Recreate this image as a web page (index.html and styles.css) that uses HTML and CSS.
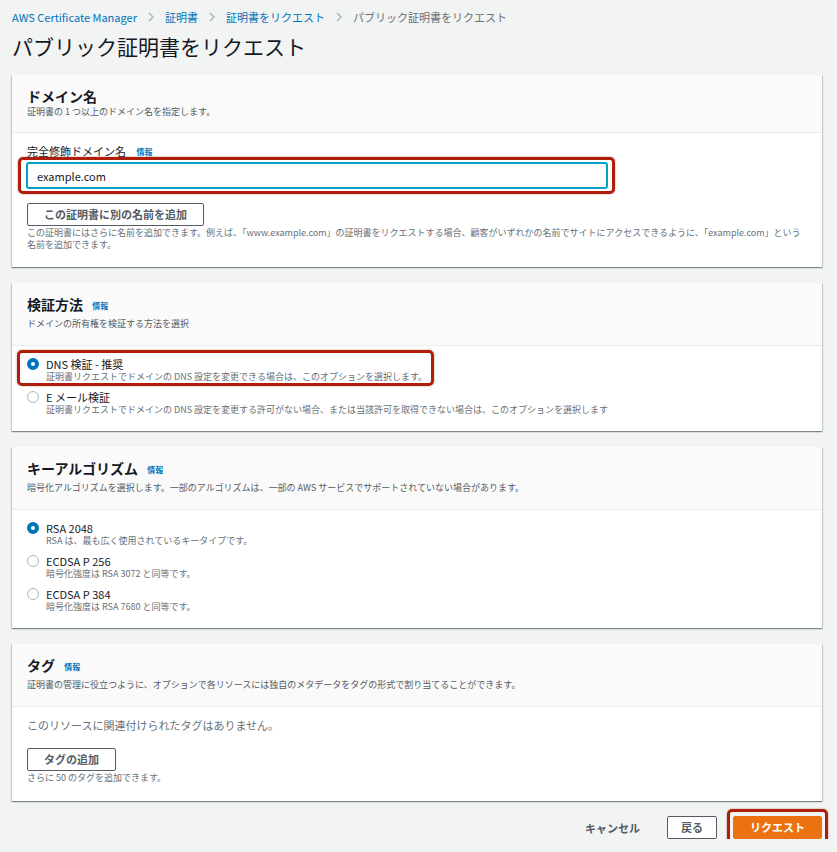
FILE: index.html
```html
<!DOCTYPE html>
<html lang="ja">
<head>
    <meta charset="UTF-8">
    <title>パブリック証明書をリクエスト</title>
    <link rel="stylesheet" href="styles.css">
</head>

<body>

    <div class="m_crumbs">
        <a class="m_link" href="#">AWS Certificate Manager</a>
        <svg class="m_chev" width="6" height="10" viewBox="0 0 6 10"><polyline points="1,1 5,5 1,9"/></svg>
        <a class="m_link" href="#">証明書</a>
        <svg class="m_chev" width="6" height="10" viewBox="0 0 6 10"><polyline points="1,1 5,5 1,9"/></svg>
        <a class="m_link" href="#">証明書をリクエスト</a>
        <svg class="m_chev" width="6" height="10" viewBox="0 0 6 10"><polyline points="1,1 5,5 1,9"/></svg>
        <span class="m_current">パブリック証明書をリクエスト</span>
    </div>
    <h1 class="m_title">パブリック証明書をリクエスト</h1>

    <div class="m_panel">
        <div class="m_head">
            <h2>ドメイン名</h2>
            <p>証明書の 1 つ以上のドメイン名を指定します。</p>
        </div>
        <div class="m_body">
            <label class="m_label">完全修飾ドメイン名 <a class="m_info" href="#">情報</a></label>
            <div class="m_mark m_mark_input"><input class="m_input" type="text" value="example.com"></div>
            <button class="m_button m_add">この証明書に別の名前を追加</button>
            <p class="m_hint">この証明書にはさらに名前を追加できます。例えば、「www.example.com」の証明書をリクエストする場合、顧客がいずれかの名前でサイトにアクセスできるように、「example.com」という名前を追加できます。</p>
        </div>
    </div>

    <div class="m_panel">
        <div class="m_head m_head_info">
            <h2>検証方法 <a class="m_info" href="#">情報</a></h2>
            <p>ドメインの所有権を検証する方法を選択</p>
        </div>
        <div class="m_body m_options">
            <div class="m_mark m_mark_option">
                <div class="m_option">
                    <span class="m_radio checked"></span>
                    <div>
                        <div class="m_opt_label">DNS 検証 - 推奨</div>
                        <div class="m_opt_desc">証明書リクエストでドメインの DNS 設定を変更できる場合は、このオプションを選択します。</div>
                    </div>
                </div>
            </div>
            <div class="m_option">
                <span class="m_radio"></span>
                <div>
                    <div class="m_opt_label">E メール検証</div>
                    <div class="m_opt_desc">証明書リクエストでドメインの DNS 設定を変更する許可がない場合、または当該許可を取得できない場合は、このオプションを選択します</div>
                </div>
            </div>
        </div>
    </div>

    <div class="m_panel">
        <div class="m_head m_head_info">
            <h2>キーアルゴリズム <a class="m_info" href="#">情報</a></h2>
            <p>暗号化アルゴリズムを選択します。一部のアルゴリズムは、一部の AWS サービスでサポートされていない場合があります。</p>
        </div>
        <div class="m_body m_options">
            <div class="m_option">
                <span class="m_radio checked"></span>
                <div>
                    <div class="m_opt_label">RSA 2048</div>
                    <div class="m_opt_desc">RSA は、最も広く使用されているキータイプです。</div>
                </div>
            </div>
            <div class="m_option">
                <span class="m_radio"></span>
                <div>
                    <div class="m_opt_label">ECDSA P 256</div>
                    <div class="m_opt_desc">暗号化強度は RSA 3072 と同等です。</div>
                </div>
            </div>
            <div class="m_option">
                <span class="m_radio"></span>
                <div>
                    <div class="m_opt_label">ECDSA P 384</div>
                    <div class="m_opt_desc">暗号化強度は RSA 7680 と同等です。</div>
                </div>
            </div>
        </div>
    </div>

    <div class="m_panel">
        <div class="m_head m_head_info">
            <h2>タグ <a class="m_info" href="#">情報</a></h2>
            <p>証明書の管理に役立つように、オプションで各リソースには独自のメタデータをタグの形式で割り当てることができます。</p>
        </div>
        <div class="m_body m_tags">
            <p class="m_empty">このリソースに関連付けられたタグはありません。</p>
            <button class="m_button m_add">タグの追加</button>
            <p class="m_hint">さらに 50 のタグを追加できます。</p>
        </div>
    </div>

    <div class="m_footer">
        <button class="m_cancel">キャンセル</button>
        <button class="m_button">戻る</button>
        <div class="m_mark m_mark_btn"><button class="m_button important">リクエスト</button></div>
    </div>

</body>
</html>
```

FILE: styles.css
```css
* {margin: 0;padding: 0;box-sizing: border-box;}
body {background: #f2f3f3; color: #16191f; font-family: "Noto Sans CJK JP", sans-serif; padding: 0 15px 0 12px;}
a {text-decoration: none;}

.m_crumbs {display: flex; align-items: center; gap: 11px; padding-top: 10px; font-size: 11px; line-height: 14px;}
.m_link {color: #0073bb;}
.m_current {color: #687078;}
.m_chev {fill: none; stroke: #aab7b8; stroke-width: 1.5;}
.m_title {font-size: 21px; font-weight: normal; line-height: 28px; margin: 8px 0 15px; letter-spacing: 0;}

.m_panel {background: #fff; margin-bottom: 16px; box-shadow: 0 1px 1px 0 rgba(0,28,36,.3), 1px 1px 1px 0 rgba(0,28,36,.15), -1px 1px 1px 0 rgba(0,28,36,.15);}
.m_head {background: #fafafa; border-bottom: 1px solid #eaeded; padding: 12px 15px 13px;}
.m_head h2 {font-size: 14px; line-height: 18px; font-weight: bold;}
.m_head p {font-size: 9px; line-height: 14px; color: #545b64;}
.m_head_info {padding-bottom: 14px;}
.m_head_info p {margin-top: 2px;}
.m_info {color: #0073bb; font-size: 8px; font-weight: bold; margin-left: 6px; vertical-align: 1px;}

.m_body {padding: 11px 15px 16px;}
.m_label {display: block; font-size: 11px; line-height: 14px;}
.m_label .m_info {margin-left: 8px;}
.m_input {display: block; width: 580px; height: 25px; border: 1px solid #00a1c9; box-shadow: 0 0 0 1px #00a1c9; border-radius: 2px; padding: 0 9px; font-family: inherit; font-size: 11px; color: #16191f; outline: none;}

.m_mark {width: fit-content; border: 3px solid #ad1f0b; border-radius: 5px; box-shadow: 0 0 2px rgba(120,20,0,.5);}
.m_mark_input {padding: 3px 5px 3px 6px; margin: -2px -8px -6px -9px;}
.m_mark_option {padding: 4px 4px 0 7px; margin: -7px 0 -3px -10px;}
.m_mark_btn {display: flex; padding: 4px 3px; margin: -7px -6px;}

.m_button {display: inline-block; height: 23px; padding: 0 13px; border: 1px solid #545b64; border-radius: 2px; background: #fff; color: #545b64; font-family: inherit; font-size: 11px; font-weight: bold; line-height: 21px; cursor: pointer;}
.m_button.important {background: #ec7211; border-color: #ec7211; color: #fff; padding: 0 16px;}
.m_add {display: block; margin-top: 15px; padding: 0 16px;}
.m_hint {font-size: 9px; line-height: 12px; color: #687078; margin-top: 1px;}

.m_options {display: flex; flex-direction: column; gap: 7px; padding-bottom: 15px;}
.m_option {display: flex; align-items: flex-start;}
.m_radio {flex: none; width: 12px; height: 12px; margin: 1px 7px 0 0; border: 1px solid #aab7b8; border-radius: 50%; background: #fff;}
.m_radio.checked {border: 4px solid #0073bb;}
.m_opt_label {font-size: 11px; line-height: 14px;}
.m_opt_desc {font-size: 9px; line-height: 12px; color: #687078;}

.m_tags {padding: 10px 15px 17px;}
.m_empty {font-size: 11px; line-height: 16px; color: #687078;}

.m_footer {display: flex; justify-content: flex-end; align-items: center; margin-top: -1px;}
.m_cancel {border: none; background: none; padding: 0 13px; margin-right: 14px; height: 23px; font-family: inherit; font-size: 11px; font-weight: bold; color: #545b64; cursor: pointer;}
.m_footer .m_mark {margin-left: 10px;}
```
